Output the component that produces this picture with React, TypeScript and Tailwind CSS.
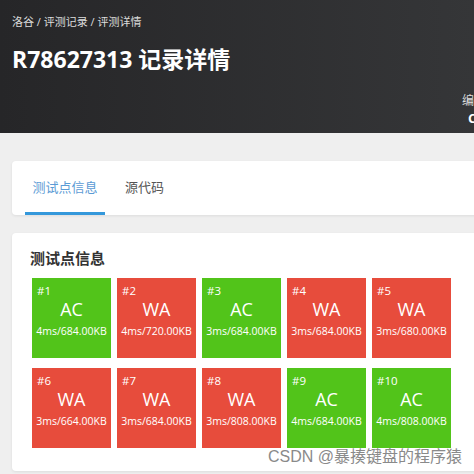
import React from 'react';

type Case = { id: number; status: 'AC' | 'WA'; time: string; mem: string };

const cases: Case[] = [
  { id: 1, status: 'AC', time: '4ms', mem: '684.00KB' },
  { id: 2, status: 'WA', time: '4ms', mem: '720.00KB' },
  { id: 3, status: 'AC', time: '3ms', mem: '684.00KB' },
  { id: 4, status: 'WA', time: '3ms', mem: '684.00KB' },
  { id: 5, status: 'WA', time: '3ms', mem: '680.00KB' },
  { id: 6, status: 'WA', time: '3ms', mem: '664.00KB' },
  { id: 7, status: 'WA', time: '3ms', mem: '684.00KB' },
  { id: 8, status: 'WA', time: '3ms', mem: '808.00KB' },
  { id: 9, status: 'AC', time: '4ms', mem: '684.00KB' },
  { id: 10, status: 'AC', time: '4ms', mem: '808.00KB' },
];

function CaseBox({ c }: { c: Case }) {
  const bg = c.status === 'AC' ? 'bg-[#52c41a]' : 'bg-[#e74c3c]';
  return (
    <div className={`${bg} h-[80px] text-white flex flex-col pt-[5px]`}>
      <div className="px-[5px] text-[11.5px] leading-[15px]">#{c.id}</div>
      <div className="text-center text-[18px] leading-[22px]">{c.status}</div>
      <div className="text-center text-[10.5px] leading-[16px] mt-[3px] whitespace-nowrap">
        {c.time}/{c.mem}
      </div>
    </div>
  );
}

export default function App() {
  return (
    <div
      className="relative w-[474px] h-[474px] overflow-hidden bg-[#efefef]"
      style={{ fontFamily: '"Open Sans", "Noto Sans CJK SC", sans-serif' }}
    >
      <header className="h-[133px] bg-gradient-to-r from-[#262628] to-[#353638] text-white flex">
        <div className="flex-1 px-3 pt-[14px]">
          <div className="text-[11px] leading-[16px] text-[#dcdcdc]">洛谷 / 评测记录 / 评测详情</div>
          <h1 className="mt-[14px] text-[23px] leading-[30px] font-bold">R78627313 记录详情</h1>
        </div>
        <div className="w-[48px] shrink-0 -mr-[36px] pt-[93px] flex flex-col items-start">
          <div className="text-[12px] leading-[16px] text-[#ddd]">编程语言</div>
          <div className="text-[13px] leading-[18px] font-bold pl-[6px]">C++</div>
        </div>
      </header>

      <div className="w-[520px] px-3 pt-[28px] flex flex-col gap-[18px]">
        <div className="bg-white rounded-[4px] shadow-[0_1px_3px_rgba(0,0,0,0.08)] h-[54px] flex px-[13px]">
          <div className="relative w-[80px] flex items-center justify-center text-[13px] text-[#5b9bd5]">
            测试点信息
            <div className="absolute left-0 right-0 bottom-0 h-[3px] bg-[#3498db]" />
          </div>
          <div className="ml-[20px] flex items-center text-[13px] text-[#555]">源代码</div>
        </div>

        <div className="bg-white rounded-[4px] shadow-[0_1px_3px_rgba(0,0,0,0.08)] px-5 pt-[14px] pb-[23px]">
          <h2 className="-ml-[2px] text-[15px] leading-[22px] font-bold text-[#333]">测试点信息</h2>
          <div className="mt-[9px] grid grid-cols-[repeat(5,79px)] gap-x-[6px] gap-y-[10px]">
            {cases.map((c) => (
              <CaseBox key={c.id} c={c} />
            ))}
          </div>
        </div>
      </div>

      <div
        className="absolute left-[268px] top-[446px] text-[16px] leading-[22px] text-[#8a8a8a] whitespace-nowrap"
        style={{ fontFamily: '"Liberation Sans", "Noto Sans CJK SC", sans-serif' }}
      >
        CSDN @暴揍键盘的程序猿
      </div>
    </div>
  );
}
